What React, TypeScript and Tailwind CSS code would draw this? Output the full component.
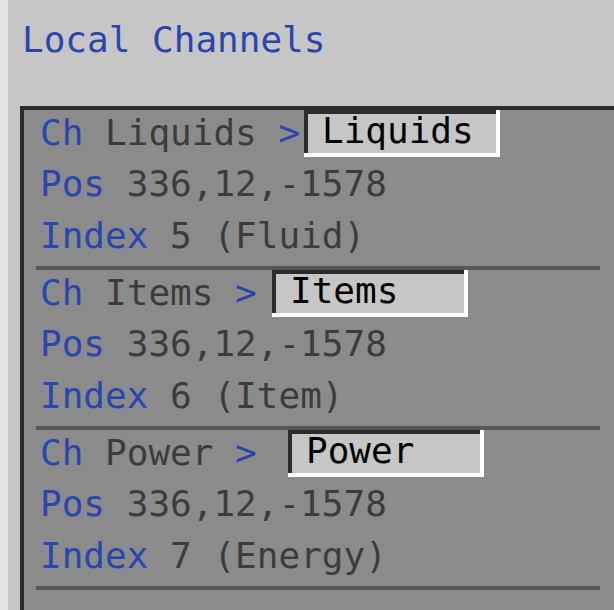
// Local channel list — Minecraft-style GUI panel. Each channel block shows
// its name field, position and the index/type line, followed by a divider.

const FONT = { fontFamily: '"DejaVu Sans Mono", "Liberation Mono", monospace' }

interface Channel {
  name: string
  pos: string
  index: number
  kind: string
  // width of the "Ch Name >" label, so the text field lands where it should
  labelW: string
}

const channels: Channel[] = [
  { name: 'Liquids', pos: '336,12,-1578', index: 5, kind: 'Fluid', labelW: 'w-[264px]' },
  { name: 'Items', pos: '336,12,-1578', index: 6, kind: 'Item', labelW: 'w-[232px]' },
  { name: 'Power', pos: '336,12,-1578', index: 7, kind: 'Energy', labelW: 'w-[248px]' },
]

export default function App() {
  return (
    <div
      className="flex h-[610px] w-[614px] flex-col overflow-hidden border-l-8 border-[#e4e4e4] bg-[#c6c6c6] text-[36px]"
      style={FONT}
    >
      <div className="whitespace-nowrap pl-[14px] pt-[18px] leading-[44px] text-[#2a45b0]">
        Local Channels
      </div>

      <div className="ml-[12px] mt-[44px] flex-1 border-l-4 border-t-4 border-[#2b2b2b] bg-[#8b8b8b]">
        {channels.map((c) => (
          <ChannelBlock key={c.name} channel={c} />
        ))}
      </div>
    </div>
  )
}


function ChannelBlock({ channel }: { channel: Channel }) {
  return (
    <div>
      <div className="flex h-[52px] items-start pl-[16px]">
        <div className={`${channel.labelW} whitespace-nowrap pt-[1px] leading-[44px]`}>
          <span className="text-[#2a45b0]">Ch</span>
          <span className="text-[#3c3c3c]"> {channel.name} </span>
          <span className="text-[#2a45b0]">&gt;</span>
        </div>
        <TextField value={channel.name} />
      </div>

      <div className="h-[52px] whitespace-nowrap pl-[16px] leading-[44px]">
        <span className="text-[#2a45b0]">Pos</span>
        <span className="text-[#3c3c3c]"> {channel.pos}</span>
      </div>

      <div className="h-[52px] whitespace-nowrap pl-[16px] leading-[44px]">
        <span className="text-[#2a45b0]">Index</span>
        <span className="text-[#3c3c3c]"> {channel.index} ({channel.kind})</span>
      </div>

      <div className="ml-[12px] h-[4px] w-[564px] bg-[#585858]" />
    </div>
  )
}


function TextField({ value }: { value: string }) {
  // Inset field: dark top/left edge, white bottom/right edge.
  return (
    <div className="h-[47px] w-[196px] bg-white pb-[4px] pr-[4px]">
      <div className="h-full border-l-4 border-t-4 border-[#2b2b2b] bg-[#c6c6c6] pl-[14px] leading-[34px] text-black whitespace-nowrap">
        {value}
      </div>
    </div>
  )
}
